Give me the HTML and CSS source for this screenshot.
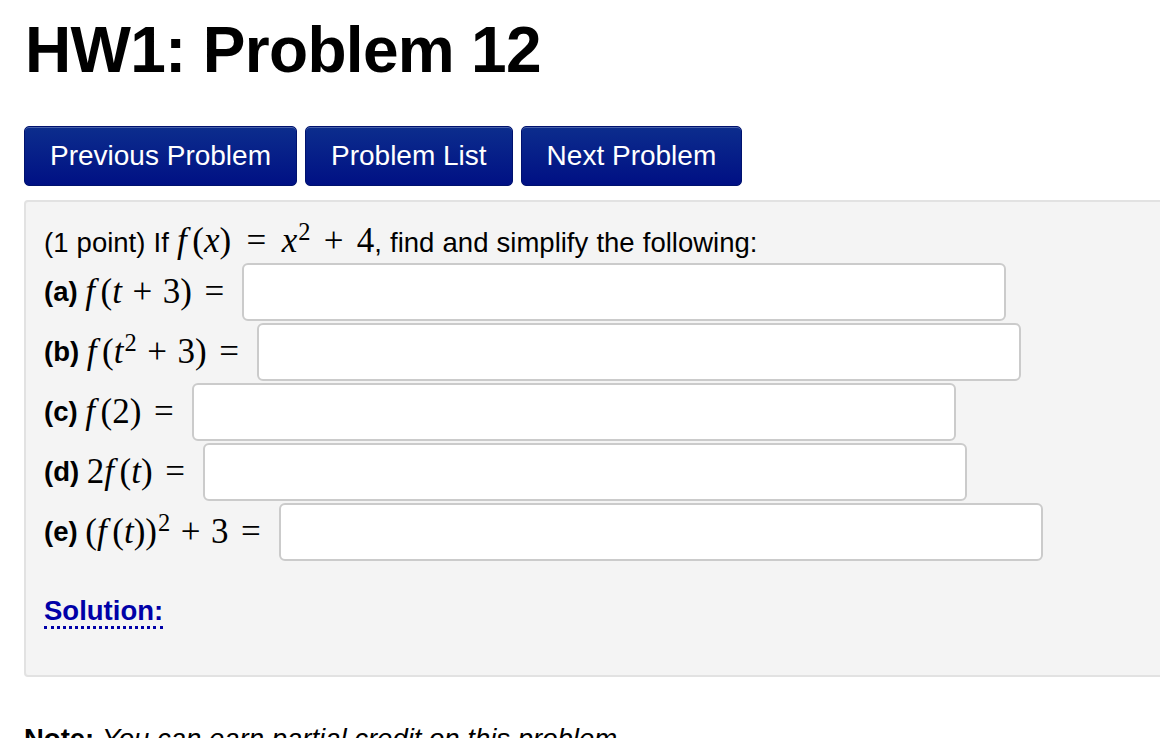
FILE: index.html
```html
<!DOCTYPE html>
<html lang="en">
<head>
  <meta charset="UTF-8">
  <title>HW1: Problem 12</title>
  <link rel="stylesheet" href="styles.css">
</head>
<body>
  <h1>HW1: Problem 12</h1>

  <div class="nav">
    <a class="nav-btn" href="#">Previous Problem</a>
    <a class="nav-btn" href="#">Problem List</a>
    <a class="nav-btn" href="#">Next Problem</a>
  </div>

  <div class="problem">
    <p class="intro">(1 point) If <span class="m"><i class="fn">f</i>(<i>x</i>)<span class="rel">=</span><i>x</i><sup>2</sup><span class="op">+</span>4</span>, find and simplify the following:</p>

    <div class="row">
      <b>(a)</b>&nbsp;<span class="m"><i class="fn">f</i>(<i>t</i><span class="op">+</span>3)<span class="rel">=</span></span>
      <input type="text">
    </div>
    <div class="row">
      <b>(b)</b>&nbsp;<span class="m"><i class="fn">f</i>(<i>t</i><sup>2</sup><span class="op">+</span>3)<span class="rel">=</span></span>
      <input type="text">
    </div>
    <div class="row">
      <b>(c)</b>&nbsp;<span class="m"><i class="fn">f</i>(2)<span class="rel">=</span></span>
      <input type="text">
    </div>
    <div class="row">
      <b>(d)</b>&nbsp;<span class="m">2<i class="fn">f</i>(<i>t</i>)<span class="rel">=</span></span>
      <input type="text">
    </div>
    <div class="row">
      <b>(e)</b>&nbsp;<span class="m">(<i class="fn">f</i>(<i>t</i>))<sup>2</sup><span class="op">+</span>3<span class="rel">=</span></span>
      <input type="text">
    </div>

    <div class="solution"><a href="#">Solution:</a></div>
  </div>

  <p class="note"><b>Note:</b> <i>You can earn partial credit on this problem.</i></p>
</body>
</html>
```

FILE: styles.css
```css
html {
  overflow: hidden;
}

body {
  font-family: "Liberation Sans", Arial, sans-serif;
  font-size: 27.5px;
  color: #000;
  background-color: #fff;
  margin: 0;
  padding: 0 0 0 24px;
}

h1 {
  font-size: 64px;
  line-height: 74px;
  letter-spacing: -0.7px;
  margin: 13px 0 39px 1px;
}

.nav {
  display: flex;
  gap: 8px;
}

.nav-btn {
  display: flex;
  align-items: center;
  height: 58px;
  padding: 0 25px;
  font-size: 28px;
  color: #fff;
  text-decoration: none;
  background: linear-gradient(#0c2d8d, #001084);
  border: 1px solid #00126e;
  border-radius: 5px;
  box-shadow: inset 0 1px 0 rgba(255, 255, 255, 0.25);
}

.problem {
  margin-top: 14px;
  width: 1200px;
  background-color: #f4f4f4;
  border: 2px solid #e2e2e2;
  border-radius: 4px;
  padding: 21px 18px 46px;
  line-height: 36px;
}

.intro {
  margin: 0;
  word-spacing: 0.5px;
}

.row {
  display: flex;
  align-items: center;
  height: 58px;
  padding-top: 2px;
  white-space: pre;
}

.row input {
  width: 764px;
  height: 58px;
  box-sizing: border-box;
  margin-left: 18px;
  border: 2px solid #cbcbcb;
  border-radius: 6px;
  background-color: #fff;
  font-size: 22px;
}

/* math */
.m {
  font-family: "Liberation Serif", "Times New Roman", serif;
  font-size: 35px;
  white-space: nowrap;
  word-spacing: 0;
}

.m i {
  font-style: italic;
}

.m .fn {
  margin-right: 0.16em;
}

.m sup {
  font-size: 0.7em;
  line-height: 0;
  vertical-align: 0.5em;
  margin-left: 0.04em;
}

.m .op {
  margin: 0 0.3em;
}

.m .rel {
  margin: 0 0 0 0.36em;
}

.intro .m .op {
  margin: 0 0.38em;
}

.intro .m .rel {
  margin: 0 0.44em;
}

.solution {
  margin-top: 32px;
}

.solution a {
  font-weight: bold;
  color: #0000a8;
  text-decoration: none;
  border-bottom: 3px dotted #0000a8;
}

.note {
  margin: 44px 0 0;
  line-height: 36px;
}
```
